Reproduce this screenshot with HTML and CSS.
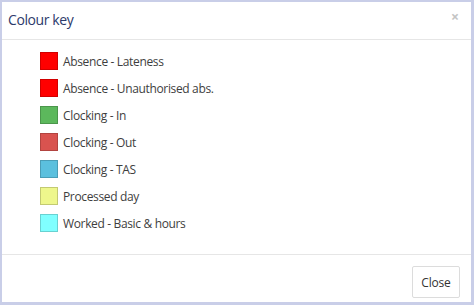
FILE: index.html
```html
<!DOCTYPE html>
<html>
<head>
<meta charset="utf-8">
<link rel="stylesheet" href="styles.css">
</head>
<body>
<div class="modal">
  <div class="modal-header">
    <h4 class="modal-title">Colour key</h4>
    <span class="close-x">×</span>
  </div>
  <div class="modal-body">
    <ul class="key-list">
      <li class="key-row"><span class="swatch sw-late"></span><span class="label">Absence - Lateness</span></li>
      <li class="key-row"><span class="swatch sw-unauth"></span><span class="label">Absence - Unauthorised abs.</span></li>
      <li class="key-row"><span class="swatch sw-in"></span><span class="label">Clocking - In</span></li>
      <li class="key-row"><span class="swatch sw-out"></span><span class="label">Clocking - Out</span></li>
      <li class="key-row"><span class="swatch sw-tas"></span><span class="label">Clocking - TAS</span></li>
      <li class="key-row"><span class="swatch sw-proc"></span><span class="label">Processed day</span></li>
      <li class="key-row"><span class="swatch sw-worked"></span><span class="label">Worked - Basic &amp; hours</span></li>
    </ul>
  </div>
  <div class="modal-footer">
    <button class="btn">Close</button>
  </div>
</div>
</body>
</html>
```
FILE: styles.css
```css
html, body {
  margin: 0;
  padding: 0;
  background: #ffffff;
}
body {
  font-family: "Open Sans", "Liberation Sans", sans-serif;
}
.modal {
  box-sizing: border-box;
  width: 474px;
  height: 305px;
  border-style: solid;
  border-color: #c9cee8;
  border-width: 2px 3px 3px 2px;
  background: #fff;
  display: flex;
  flex-direction: column;
}
.modal-header {
  height: 37px;
  border-bottom: 1px solid #e6e6e6;
  display: flex;
  align-items: center;
  justify-content: space-between;
  padding: 0 12px 0 6px;
}
.modal-title {
  margin: 0;
  font-size: 14px;
  letter-spacing: -0.4px;
  font-weight: 400;
  color: #2d3a6b;
  position: relative;
  top: -1px;
}
.close-x {
  font-size: 14px;
  color: #c4c4c4;
  font-weight: 700;
  position: relative;
  top: -4px;
}
.modal-body {
  flex: 1;
  padding: 12px 0 0 38px;
}
.key-list {
  list-style: none;
  margin: 0;
  padding: 0;
}
.key-row {
  display: flex;
  align-items: center;
  height: 18px;
  margin-bottom: 9px;
}
.swatch {
  box-sizing: border-box;
  width: 18px;
  height: 18px;
  border: 1px solid rgba(0,0,0,0.18);
  margin-right: 5px;
}
.label {
  font-size: 12px;
  letter-spacing: -0.35px;
  color: #3e3e3e;
}
.sw-late, .sw-unauth { background: #ff0000; }
.sw-in { background: #5cb85c; }
.sw-out { background: #d9534f; }
.sw-tas { background: #5bc0de; }
.sw-proc { background: #eef78c; }
.sw-worked { background: #80ffff; }
.modal-footer {
  border-top: 1px solid #e6e6e6;
  height: 48px;
  display: flex;
  justify-content: flex-end;
  align-items: flex-start;
  padding: 11px 11px 0 0;
  box-sizing: border-box;
}
.btn {
  width: 48px;
  height: 32px;
  background: #fff;
  border: 1px solid #dcdcdc;
  border-radius: 2px;
  font-family: "Open Sans", "Liberation Sans", sans-serif;
  font-size: 12px;
  letter-spacing: -0.2px;
  color: #333;
  padding: 0;
}
```
